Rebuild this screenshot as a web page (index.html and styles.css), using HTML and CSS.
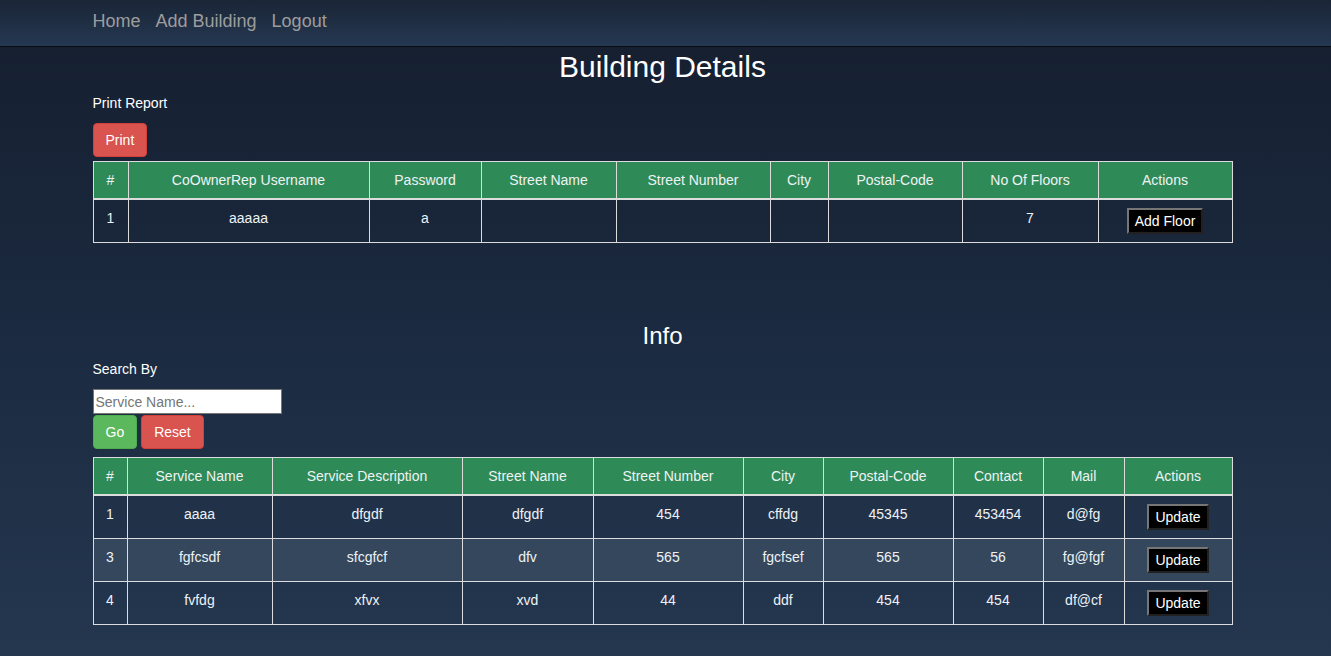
FILE: index.html
```html
<!DOCTYPE html>
<html>
<head>
<meta charset="utf-8">
<title>Building Details</title>
<link rel="stylesheet" href="styles.css">
</head>
<body>
<nav class="navbar">
  <div class="container nav-inner">
    <a class="nav-link" href="#">Home</a>
    <a class="nav-link" href="#">Add Building</a>
    <a class="nav-link" href="#">Logout</a>
  </div>
</nav>
<main class="container">
  <h2 class="page-title">Building Details</h2>
  <p class="label">Print Report</p>
  <button class="btn btn-danger btn-print">Print</button>
  <table class="data-table">
    <colgroup>
      <col style="width:35px"><col style="width:241px"><col style="width:112px"><col style="width:135px"><col style="width:154px"><col style="width:58px"><col style="width:134px"><col style="width:136px"><col style="width:134px">
    </colgroup>
    <thead>
      <tr><th>#</th><th>CoOwnerRep Username</th><th>Password</th><th>Street Name</th><th>Street Number</th><th>City</th><th>Postal-Code</th><th>No Of Floors</th><th>Actions</th></tr>
    </thead>
    <tbody>
      <tr><td>1</td><td>aaaaa</td><td>a</td><td></td><td></td><td></td><td></td><td>7</td><td><button class="btn-dark">Add Floor</button></td></tr>
    </tbody>
  </table>

  <h3 class="section-title">Info</h3>
  <p class="label">Search By</p>
  <input class="search-input" type="text" placeholder="Service Name...">
  <div class="search-actions">
    <button class="btn btn-success">Go</button>
    <button class="btn btn-danger">Reset</button>
  </div>
  <table class="data-table striped">
    <colgroup>
      <col style="width:34px"><col style="width:145px"><col style="width:190px"><col style="width:131px"><col style="width:150px"><col style="width:80px"><col style="width:130px"><col style="width:90px"><col style="width:81px"><col style="width:108px">
    </colgroup>
    <thead>
      <tr><th>#</th><th>Service Name</th><th>Service Description</th><th>Street Name</th><th>Street Number</th><th>City</th><th>Postal-Code</th><th>Contact</th><th>Mail</th><th>Actions</th></tr>
    </thead>
    <tbody>
      <tr><td>1</td><td>aaaa</td><td>dfgdf</td><td>dfgdf</td><td>454</td><td>cffdg</td><td>45345</td><td>453454</td><td>d@fg</td><td><button class="btn-dark">Update</button></td></tr>
      <tr><td>3</td><td>fgfcsdf</td><td>sfcgfcf</td><td>dfv</td><td>565</td><td>fgcfsef</td><td>565</td><td>56</td><td>fg@fgf</td><td><button class="btn-dark">Update</button></td></tr>
      <tr><td>4</td><td>fvfdg</td><td>xfvx</td><td>xvd</td><td>44</td><td>ddf</td><td>454</td><td>454</td><td>df@cf</td><td><button class="btn-dark">Update</button></td></tr>
    </tbody>
  </table>
</main>
</body>
</html>
```
FILE: styles.css
```css
* { box-sizing: border-box; }

html, body {
  margin: 0;
  padding: 0;
}

body {
  font-family: "Liberation Sans", Arial, Helvetica, sans-serif;
  font-size: 14px;
  line-height: 20px;
  color: #fff;
  min-height: 656px;
  background: linear-gradient(to bottom, #151e2e 0px, #1b2a40 330px, #24374f 656px);
}

.container {
  width: 1140px;
  margin-left: calc(50% - 573px);
}

.navbar {
  height: 47px;
  background: linear-gradient(to bottom, #1a2536 0%, #253852 100%);
  border-bottom: 1px solid #0a0d12;
}

.nav-inner {
  display: flex;
  gap: 15px;
  height: 46px;
  align-items: center;
  padding-bottom: 4px;
}

.nav-link {
  color: #9d9d9d;
  text-decoration: none;
  font-size: 18px;
  line-height: 20px;
}

.page-title {
  margin: 3px 0 10px;
  font-size: 30px;
  font-weight: 500;
  line-height: 33px;
  text-align: center;
  color: #fff;
}

.label {
  margin: 0 0 10px;
  font-size: 14px;
  line-height: 20px;
}

.btn {
  display: inline-block;
  height: 34px;
  padding: 6px 12px;
  font-family: inherit;
  font-size: 14px;
  line-height: 20px;
  color: #fff;
  border: 1px solid transparent;
  border-radius: 4px;
  cursor: pointer;
}

.btn-danger {
  background: #d9534f;
  border-color: #d43f3a;
}

.btn-success {
  background: #5cb85c;
  border-color: #4cae4c;
}

.btn-print {
  display: block;
  margin-bottom: 4px;
}

.data-table {
  width: 1139px;
  table-layout: fixed;
  border-collapse: collapse;
}

.data-table th,
.data-table td {
  border: 1px solid #dcdcdc;
  padding: 8px;
  text-align: center;
  vertical-align: top;
  line-height: 20px;
  font-size: 14px;
  color: #eef2f5;
}

.data-table th {
  background: #2e8b57;
  font-weight: normal;
  border-bottom: 2px solid #dcdcdc;
}

.data-table tbody td {
  height: 42px;
}

.striped tbody tr:nth-child(even) td {
  background: #34475d;
}

.btn-dark {
  display: inline-block;
  background: #000;
  color: #fff;
  font-family: "Liberation Sans", Arial, sans-serif;
  font-size: 14px;
  line-height: 18px;
  padding: 2px 6px;
  border: 2px outset #767676;
  margin: 0;
  vertical-align: top;
}

.section-title {
  margin: 80px 0 10px;
  font-size: 24px;
  font-weight: 500;
  line-height: 26px;
  text-align: center;
}

.search-input {
  display: block;
  width: 189px;
  height: 25px;
  padding: 1px 2px;
  font-family: "Liberation Sans", Arial, sans-serif;
  font-size: 14px;
  border: 1px solid #767676;
  background: #fff;
  color: #000;
  margin: 0;
}

.search-input::placeholder {
  color: #757575;
}

.search-actions {
  display: flex;
  gap: 4px;
  margin: 1px 0 8px;
}
```
